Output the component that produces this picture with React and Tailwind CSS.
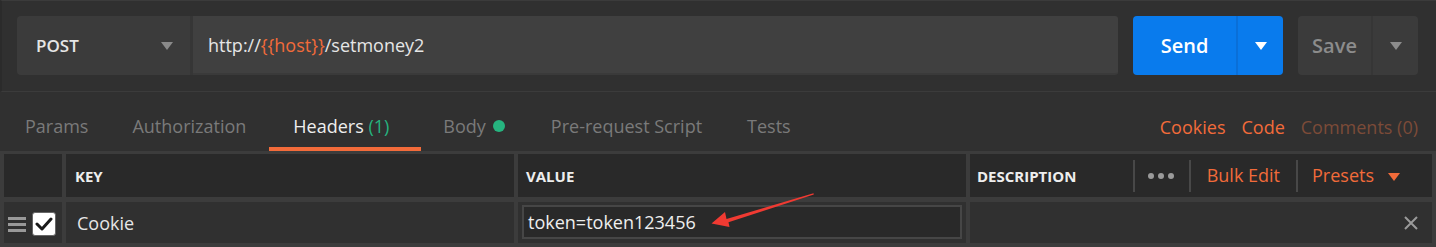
function Tri({ color, className = "" }) {
  return (
    <svg width="12" height="8" viewBox="0 0 12 8" className={className}>
      <polygon points="0,0 12,0 6,8" fill={color} />
    </svg>
  );
}

export default function App() {
  return (
    <div className="relative w-[1436px] h-[247px] overflow-hidden bg-[#303030] font-['Open_Sans',sans-serif]">
      {/* request bar */}
      <div className="h-[92px] border-t border-b border-[#3b3b3b] border-l-2 border-l-[#2b2b2b] pt-[15px] pl-[15px]">
        <div className="flex h-[59px]">
          <div className="w-[173px] h-full bg-[#3b3b3b] rounded-l-[4px] flex items-center justify-between pl-[19px] pr-[17px]">
            <span className="text-[17px] font-semibold text-[#e6e6e6] leading-none">POST</span>
            <Tri color="#8a8a8a" />
          </div>
          <div className="w-[3px] h-full bg-[#363636]" />
          <div className="w-[925px] h-full bg-[#404040] rounded-r-[3px] border-b-2 border-[#3a3a3a] flex items-center pl-[15px] pt-[1px]">
            <span className="text-[18px] text-[#e6e6e6] leading-none">
              http://<span className="text-[#f26b3a]">{"{{host}}"}</span>/setmoney2
            </span>
          </div>
          <div className="ml-[15px] w-[150px] h-full bg-[#097bed] rounded-[4px] flex">
            <div className="w-[103px] flex items-center justify-center">
              <span className="text-[20px] font-semibold text-white leading-none">Send</span>
            </div>
            <div className="w-[2px] h-full bg-[#0a6fd8]" />
            <div className="flex-1 flex items-center justify-center">
              <Tri color="#ffffff" />
            </div>
          </div>
          <div className="ml-[15px] w-[120px] h-full bg-[#3b3b3b] rounded-[4px] flex">
            <div className="w-[73px] flex items-center justify-center">
              <span className="text-[20px] font-semibold text-[#8c8c8c] leading-none">Save</span>
            </div>
            <div className="w-[2px] h-full bg-[#363636]" />
            <div className="flex-1 flex items-center justify-center">
              <Tri color="#8c8c8c" />
            </div>
          </div>
        </div>
      </div>

      {/* tabs */}
      <div className="h-[59px] flex items-start pl-[2px] pr-[18px] text-[18px] leading-[24px]">
        <div className="pl-[23px] pr-[21px] pt-[22px] pb-[13px] text-[#7a7a7a]">Params</div>
        <div className="pl-[23px] pr-[23px] pt-[22px] pb-[13px] text-[#7a7a7a]">Authorization</div>
        <div className="pl-[24px] pr-[32px] pt-[22px] pb-[9px] border-b-4 border-[#f26b3a] text-[#eeeeee]">
          Headers <span className="text-[#26b47f]">(1)</span>
        </div>
        <div className="pl-[22px] pr-[23px] pt-[22px] pb-[13px] text-[#7a7a7a] flex items-center">
          Body
          <span className="ml-[7px] w-[12px] h-[12px] rounded-full bg-[#26b47f] inline-block" />
        </div>
        <div className="pl-[23px] pr-[22px] pt-[22px] pb-[13px] text-[#7a7a7a]">Pre-request Script</div>
        <div className="pl-[23px] pr-[22px] pt-[22px] pb-[13px] text-[#7a7a7a]">Tests</div>
        <div className="ml-auto flex gap-[16px] pt-[23px] text-[#f26b3a]">
          <span>Cookies</span>
          <span>Code</span>
          <span className="text-[#7c4b38]">Comments (0)</span>
        </div>
      </div>

      {/* table */}
      <div className="bg-[#3c3c3c] pt-[3px] px-[4px] pb-[4px] flex flex-col gap-[5px]">
        <div className="h-[43px] flex gap-[4px]">
          <div className="w-[58px] bg-[#292929]" />
          <div className="w-[448px] bg-[#292929] flex items-center pl-[9px] pt-[1px]">
            <span className="text-[15px] font-bold text-[#eeeeee]">KEY</span>
          </div>
          <div className="w-[448px] bg-[#292929] flex items-center pl-[8px] pt-[1px]">
            <span className="text-[15px] font-bold text-[#eeeeee]">VALUE</span>
          </div>
          <div className="flex-1 bg-[#292929] flex items-center pl-[7px] pr-[32px]">
            <span className="text-[15px] font-bold text-[#eeeeee] pt-[1px]">DESCRIPTION</span>
            <div className="ml-auto flex items-center">
              <div className="w-[2px] h-[32px] bg-[#484848]" />
              <div className="ml-[13px] flex gap-[4px]">
                <span className="w-[6px] h-[6px] rounded-full bg-[#9a9a9a]" />
                <span className="w-[6px] h-[6px] rounded-full bg-[#9a9a9a]" />
                <span className="w-[6px] h-[6px] rounded-full bg-[#9a9a9a]" />
              </div>
              <div className="ml-[15px] w-[2px] h-[32px] bg-[#484848]" />
              <span className="ml-[16px] text-[18px] text-[#f26b3a]">Bulk Edit</span>
              <div className="ml-[16px] w-[2px] h-[32px] bg-[#484848]" />
              <span className="ml-[14px] text-[18px] text-[#f26b3a]">Presets</span>
              <Tri color="#f26b3a" className="ml-[14px] mt-[2px]" />
            </div>
          </div>
        </div>
        <div className="h-[41px] flex gap-[4px]">
          <div className="w-[58px] bg-[#303030] flex items-center pl-[4px] pt-[3px]">
            <div className="flex flex-col gap-[3px]">
              <span className="w-[18px] h-[3px] bg-[#999999]" />
              <span className="w-[18px] h-[3px] bg-[#999999]" />
              <span className="w-[18px] h-[3px] bg-[#999999]" />
            </div>
            <div className="ml-[6px] w-[24px] h-[24px] bg-white rounded-[3px] border border-[#666666] flex items-center justify-center">
              <svg width="18" height="14" viewBox="0 0 18 14">
                <polyline points="2,7 7,12 16,2" fill="none" stroke="#1a1a1a" strokeWidth="3" strokeLinecap="round" strokeLinejoin="round" />
              </svg>
            </div>
          </div>
          <div className="w-[448px] bg-[#303030] flex items-center pl-[11px] pt-[1px]">
            <span className="text-[18px] text-[#e6e6e6]">Cookie</span>
          </div>
          <div className="w-[448px] bg-[#303030] pl-[4px] pr-[4px] pt-[3px] pb-[4px]">
            <div className="h-full border-2 border-[#464646] bg-[#292929] flex items-center pl-[4px]">
              <span className="text-[18px] text-[#eeeeee]">token=token123456</span>
            </div>
          </div>
          <div className="flex-1 bg-[#303030] flex items-center justify-end pr-[14px] pt-[1px]">
            <svg width="14" height="14" viewBox="0 0 14 14">
              <path d="M1 1 L13 13 M13 1 L1 13" stroke="#9a9a9a" strokeWidth="2" />
            </svg>
          </div>
        </div>
      </div>

      {/* annotation arrow */}
      <svg className="absolute left-[700px] top-[190px]" width="120" height="40" viewBox="0 0 120 40">
        <polygon
          points="11.5,33.5 25,22 26.5,29 113.5,3.3 113.8,4.6 28.5,32.3 29.5,37"
          fill="#f03a32"
        />
      </svg>
    </div>
  );
}
